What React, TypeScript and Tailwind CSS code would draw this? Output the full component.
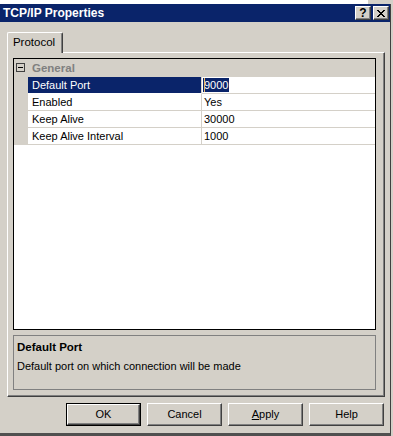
import React from "react";

const rows = [
  { name: "Default Port", value: "9000", selected: true },
  { name: "Enabled", value: "Yes" },
  { name: "Keep Alive", value: "30000" },
  { name: "Keep Alive Interval", value: "1000" },
];

function DialogButton({ label, isDefault }: { label: React.ReactNode; isDefault?: boolean }) {
  return (
    <div
      className={
        isDefault
          ? "w-[75px] h-[23px] border border-black flex"
          : "w-[75px] h-[23px] flex"
      }
    >
      <div className="flex-1 flex items-center justify-center bg-[#d4d0c8] border-t border-l border-white border-r border-b border-r-[#404040] border-b-[#404040] shadow-[inset_-1px_-1px_0_#808080]">
        {label}
      </div>
    </div>
  );
}

export default function App() {
  return (
    <div className="w-[393px] h-[436px] bg-[#d4d0c8] flex flex-col overflow-hidden font-['Liberation_Sans',Arial,sans-serif] text-[11px] text-black leading-none">
      {/* strip of the window behind */}
      <div className="h-[4px] flex shrink-0">
        <div className="w-[368px] bg-white" />
      </div>

      <div className="flex-1 w-[391px] flex flex-col border-r border-[#404040] border-b-[3px] border-b-[#505050]">
        {/* Title bar */}
        <div className="h-[18px] bg-[#0a246a] flex items-center justify-between pl-[3px] pr-[1px] shrink-0">
          <span className="text-white font-bold text-[12px]">TCP/IP Properties</span>
          <div className="flex gap-[2px]">
            <div className="w-[16px] h-[14px] bg-[#d4d0c8] border-t border-l border-white border-r border-b border-r-[#404040] border-b-[#404040] shadow-[inset_-1px_-1px_0_#808080] flex items-center justify-center font-bold text-[12px]">
              ?
            </div>
            <div className="w-[16px] h-[14px] bg-[#d4d0c8] border-t border-l border-white border-r border-b border-r-[#404040] border-b-[#404040] shadow-[inset_-1px_-1px_0_#808080] flex items-center justify-center">
              <svg width="8" height="7" viewBox="0 0 8 7">
                <path d="M0 0h2v1h1v1h2V1h1V0h2v1H7v1H6v1H5v1h1v1h1v1h1v1H6V6H5V5H3v1H2v1H0V6h1V5h1V4h1V3H2V2H1V1H0z" fill="#000" />
              </svg>
            </div>
          </div>
        </div>

        {/* Tabs */}
        <div className="mt-[10px] pl-[7px] flex">
          <div className="relative z-10 -mb-px w-[56px] h-[21px] bg-[#d4d0c8] border-l border-t border-white border-r border-r-[#404040] rounded-t-[2px] shadow-[inset_-1px_0_0_#808080] flex items-start justify-center pt-[4px] pr-[2px]">
            <span className="text-[11.5px]">Protocol</span>
          </div>
        </div>

        {/* Tab page */}
        <div className="ml-[7px] w-[378px] h-[345px] border-l border-t border-white border-r border-b border-r-[#404040] border-b-[#404040] shadow-[inset_-1px_-1px_0_#808080] pl-[5px] pt-[5px] flex flex-col">
          {/* Property grid */}
          <div className="w-[363px] h-[272px] border border-black bg-white flex flex-col">
            <div className="h-[18px] flex bg-[#d4d0c8]">
              <div className="w-[14px] pl-[2px] pt-[4px]">
                <div className="w-[9px] h-[9px] border border-[#404040] bg-[#d4d0c8] flex items-center justify-center">
                  <div className="w-[5px] h-px bg-black" />
                </div>
              </div>
              <div className="pl-[4px] pt-[4px] font-bold text-[#808080] text-[11.5px]">General</div>
            </div>
            {rows.map((r, i) => (
              <div key={i} className="h-[17px] flex">
                <div className="w-[14px] bg-[#d4d0c8]" />
                <div
                  className={
                    r.selected
                      ? "w-[174px] border-r border-[#d4d0c8] border-b border-b-white bg-[#0a246a] text-white pl-[4px] flex items-center"
                      : "w-[174px] border-r border-b border-[#d4d0c8] pl-[4px] flex items-center"
                  }
                >
                  {r.name}
                </div>
                <div className="flex-1 border-b border-[#d4d0c8] pl-[1px] flex items-center">
                  {r.selected ? (
                    <span className="relative bg-[#0a246a] text-white h-[14px] pl-[1px] pr-[1px] flex items-center">
                      <span className="absolute left-[1px] top-0 w-px h-[14px] bg-[#e9b86e]" />
                      {r.value}
                    </span>
                  ) : (
                    <span className="pl-[1px]">{r.value}</span>
                  )}
                </div>
              </div>
            ))}
          </div>

          {/* Description */}
          <div className="mt-[5px] w-[363px] h-[55px] border border-[#808080] pl-[3px] pt-[6px] flex flex-col gap-[7px]">
            <div className="font-bold text-[11.5px]">Default Port</div>
            <div>Default port on which connection will be made</div>
          </div>
        </div>

        {/* Buttons */}
        <div className="mt-[6px] pr-[6px] flex justify-end gap-[6px]">
          <DialogButton label="OK" isDefault />
          <DialogButton label="Cancel" />
          <DialogButton
            label={
              <span>
                <span className="underline">A</span>pply
              </span>
            }
          />
          <DialogButton label="Help" />
        </div>
      </div>
    </div>
  );
}
